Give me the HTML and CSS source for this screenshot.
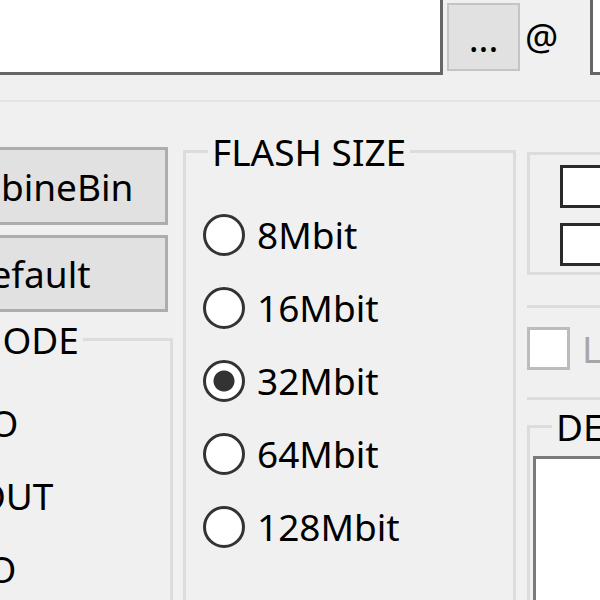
FILE: index.html
```html
<!DOCTYPE html>
<html>
<head>
<meta charset="utf-8">
<title>Flash Download Tool</title>
<link rel="stylesheet" href="styles.css">
</head>
<body>
<div class="canvas">
  <div class="toprow">
    <div class="field path"></div>
    <button class="browse">...</button>
    <span class="at">@</span>
    <div class="field offset"></div>
  </div>
  <div class="divider"></div>
  <div class="main">
    <div class="leftcol">
      <button class="btn btn-combine">CombineBin</button>
      <button class="btn btn-default">Default</button>
      <fieldset class="group mode">
        <legend>SPI MODE</legend>
        <div class="radios">
          <label class="radio"><span class="dot"></span>QIO</label>
          <label class="radio"><span class="dot"></span>QOUT</label>
          <label class="radio"><span class="dot"></span>DIO</label>
          <label class="radio"><span class="dot"></span>DOUT</label>
        </div>
      </fieldset>
    </div>
    <fieldset class="group flash">
      <legend>FLASH SIZE</legend>
      <div class="radios">
        <label class="radio"><span class="dot"></span>8Mbit</label>
        <label class="radio"><span class="dot"></span>16Mbit</label>
        <label class="radio"><span class="dot checked"></span>32Mbit</label>
        <label class="radio"><span class="dot"></span>64Mbit</label>
        <label class="radio"><span class="dot"></span>128Mbit</label>
      </div>
    </fieldset>
    <div class="rightcol">
      <div class="box checks">
        <span class="check"></span>
        <span class="check"></span>
      </div>
      <div class="box lockbox">
        <span class="check disabled"></span>
        <span class="lock-label">LockSettings</span>
      </div>
      <fieldset class="group detected">
        <legend>DETECTED INFO</legend>
        <div class="infobox"></div>
      </fieldset>
    </div>
  </div>
</div>
</body>
</html>
```
FILE: styles.css
```css
html, body {
  margin: 0;
  height: 100%;
  overflow: hidden;
  background: #f0f0f0;
}
body {
  font-family: "Noto Sans", "Open Sans", sans-serif;
  font-size: 37px;
  color: #000;
}
.canvas {
  margin-left: -130px;
  width: 1400px;
}

/* top row */
.toprow {
  display: flex;
  align-items: flex-start;
  margin-top: -5px;
  height: 80px;
}
.toprow > * { flex-shrink: 0; }
.field {
  box-sizing: border-box;
  height: 80px;
  background: #fff;
  border: 3px solid #666;
}
.path { width: 573px; }
.offset { width: 200px; margin-left: 32px; }
.browse {
  box-sizing: border-box;
  margin: 8px 0 0 4px;
  width: 73px;
  height: 68px;
  padding: 0;
  font: inherit;
  line-height: 37px;
  color: #000;
  background: #e1e1e1;
  border: 2px solid #c4c4c4;
}
.at {
  align-self: center;
  margin-left: 5px;
  width: 33px;
  line-height: 37px;
  text-align: center;
}

.divider {
  margin-top: 25px;
  border-top: 2px solid #e3e3e3;
}

/* main area */
.main {
  display: flex;
  align-items: flex-start;
  margin-top: 31px;
}
.main > * { flex-shrink: 0; }
.leftcol {
  width: 303px;
  display: flex;
  flex-direction: column;
  align-items: flex-start;
}
.btn {
  box-sizing: border-box;
  margin-left: 16px;
  width: 282px;
  padding: 0;
  font: inherit;
  line-height: 37px;
  color: #000;
  background: #e1e1e1;
  border: 3px solid #adadad;
}
.btn-combine { margin-top: 14px; height: 78px; }
.btn-default { margin-top: 10px; height: 77px; }

.group {
  box-sizing: border-box;
  margin: 0;
  padding: 0;
  min-width: 0;
  border: 3px solid #dcdcdc;
}
.group legend {
  margin-left: 22px;
  padding: 0 4px;
  line-height: 37px;
  white-space: nowrap;
}
.mode {
  align-self: stretch;
  margin-top: 9px;
}
.mode legend {
  margin-left: 27px;
}
.mode .radios {
  padding-left: 21px;
}
.flash {
  margin-left: 10px;
  width: 333px;
}
.radios {
  padding: 28px 0 60px 17px;
}
.radio {
  display: flex;
  align-items: center;
  gap: 12px;
  height: 73px;
  line-height: 37px;
}
.dot {
  flex-shrink: 0;
  box-sizing: border-box;
  width: 42px;
  height: 42px;
  border: 3px solid #333;
  border-radius: 50%;
  background: #fff;
}
.dot.checked {
  background: radial-gradient(circle, #333 0 10px, #fff 11px);
}

/* right column */
.rightcol {
  margin-left: 11px;
  width: 400px;
  display: flex;
  flex-direction: column;
}
.box {
  box-sizing: border-box;
}
.checks {
  margin-top: 19px;
  height: 123px;
  border: 3px solid #dcdcdc;
  padding: 10px 0 0 30px;
  display: flex;
  flex-direction: column;
  gap: 15px;
}
.check {
  box-sizing: border-box;
  display: block;
  width: 43px;
  height: 43px;
  border: 3px solid #2a2a2a;
  background: #fff;
}
.check.disabled {
  border-color: #bcbcbc;
}
.lockbox {
  margin-top: 30px;
  height: 95px;
  border-top: 3px solid #dcdcdc;
  border-bottom: 3px solid #dcdcdc;
  padding-top: 19px;
  display: flex;
  align-items: flex-start;
  gap: 12px;
}
.lock-label {
  color: #a6a6a6;
  line-height: 43px;
  white-space: nowrap;
}
.detected {
  margin-top: 8px;
}
.infobox {
  box-sizing: border-box;
  margin: 11px 0 0 3px;
  height: 200px;
  background: #fff;
  border: 3px solid #7a7a7a;
}
```
